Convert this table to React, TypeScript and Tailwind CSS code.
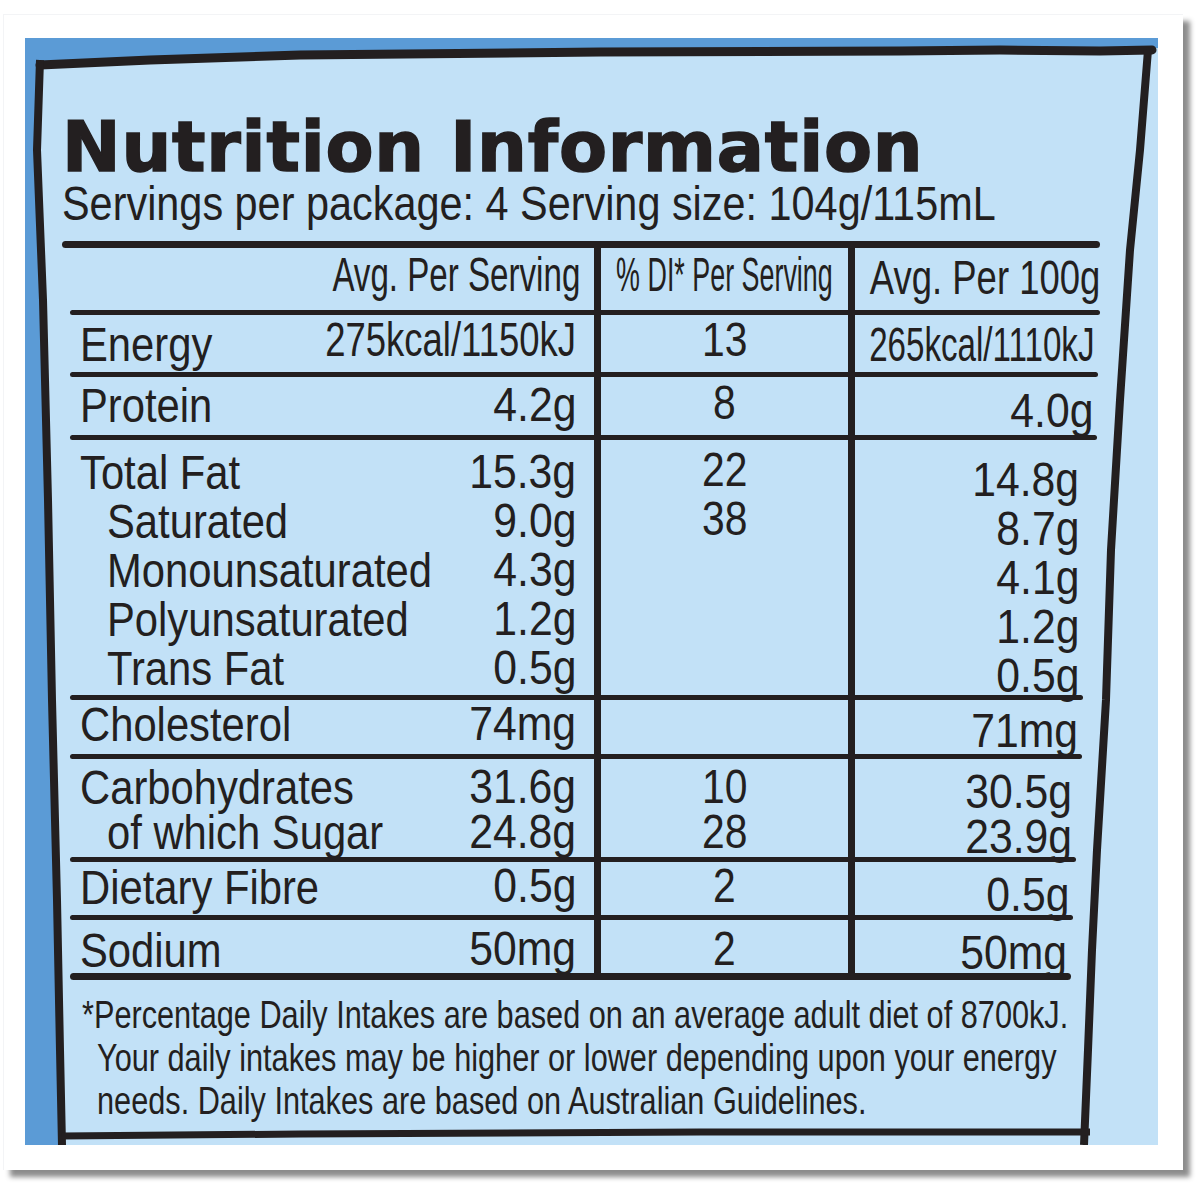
import React from "react";

const SANS = "[font-family:'Liberation_Sans',Arial,sans-serif]";

// condensed look: Liberation Sans squeezed horizontally
const LBL = "inline-block whitespace-nowrap origin-left scale-x-[0.87]";
const NUM = "inline-block whitespace-nowrap origin-right scale-x-[0.89]";
const MID = "inline-block whitespace-nowrap origin-center scale-x-[0.85]";

type Cell = { lines: string[]; pt: string; cls?: string };

interface Row {
  labels: { text: string; sub?: boolean }[];
  labelPt: string;
  lead: string;
  values: Cell;
  di: Cell;
  per100: Cell;
  h: string;
  w: string;
}

const ROWS: Row[] = [
  {
    labels: [{ text: "Energy" }],
    labelPt: "pt-[6px]",
    lead: "leading-[48px]",
    values: { lines: ["275kcal/1150kJ"], pt: "pt-[1px]", cls: "inline-block whitespace-nowrap origin-right scale-x-[0.76]" },
    di: { lines: ["13"], pt: "pt-[1px]" },
    per100: { lines: ["265kcal/1110kJ"], pt: "pt-[6px]", cls: "inline-block whitespace-nowrap origin-right scale-x-[0.69]" },
    h: "h-[57px]",
    w: "w-[1028px]",
  },
  {
    labels: [{ text: "Protein" }],
    labelPt: "pt-[5px]",
    lead: "leading-[48px]",
    values: { lines: ["4.2g"], pt: "pt-[4px]" },
    di: { lines: ["8"], pt: "pt-[2px]" },
    per100: { lines: ["4.0g"], pt: "pt-[10px]" },
    h: "h-[58px]",
    w: "w-[1027px]",
  },
  {
    labels: [
      { text: "Total Fat" },
      { text: "Saturated", sub: true },
      { text: "Monounsaturated", sub: true },
      { text: "Polyunsaturated", sub: true },
      { text: "Trans Fat", sub: true },
    ],
    labelPt: "pt-[8px]",
    lead: "leading-[49px]",
    values: { lines: ["15.3g", "9.0g", "4.3g", "1.2g", "0.5g"], pt: "pt-[7px]" },
    di: { lines: ["22", "38"], pt: "pt-[5px]" },
    per100: { lines: ["14.8g", "8.7g", "4.1g", "1.2g", "0.5g"], pt: "pt-[15px]" },
    h: "h-[255px]",
    w: "w-[1013px]",
  },
  {
    labels: [{ text: "Cholesterol" }],
    labelPt: "pt-[1px]",
    lead: "leading-[48px]",
    values: { lines: ["74mg"], pt: "pt-[0px]" },
    di: { lines: [""], pt: "pt-[0px]" },
    per100: { lines: ["71mg"], pt: "pt-[7px]" },
    h: "h-[54px]",
    w: "w-[1012px]",
  },
  {
    labels: [{ text: "Carbohydrates" }, { text: "of which Sugar", sub: true }],
    labelPt: "pt-[6px]",
    lead: "leading-[45px]",
    values: { lines: ["31.6g", "24.8g"], pt: "pt-[5px]" },
    di: { lines: ["10", "28"], pt: "pt-[5px]" },
    per100: { lines: ["30.5g", "23.9g"], pt: "pt-[10px]" },
    h: "h-[98px]",
    w: "w-[1006px]",
  },
  {
    labels: [{ text: "Dietary Fibre" }],
    labelPt: "pt-[2px]",
    lead: "leading-[48px]",
    values: { lines: ["0.5g"], pt: "pt-[0px]" },
    di: { lines: ["2"], pt: "pt-[0px]" },
    per100: { lines: ["0.5g"], pt: "pt-[9px]" },
    h: "h-[53px]",
    w: "w-[1003px]",
  },
  {
    labels: [{ text: "Sodium" }],
    labelPt: "pt-[7px]",
    lead: "leading-[48px]",
    values: { lines: ["50mg"], pt: "pt-[5px]" },
    di: { lines: ["2"], pt: "pt-[5px]" },
    per100: { lines: ["50mg"], pt: "pt-[9px]" },
    h: "h-[53px]",
    w: "w-[1001px]",
  },
];

const SEP_WIDTHS = ["w-[1028px]", "w-[1027px]", "w-[1013px]", "w-[1012px]", "w-[1006px]", "w-[1003px]"];

function Lines({ cell, lead, align, cls }: { cell: Cell; lead: string; align: string; cls: string }) {
  return (
    <div className={`${cell.pt} ${lead}`}>
      {cell.lines.map((l, i) => (
        <div key={i} className={`flex ${align}`}>
          <span className={cell.cls ?? cls}>{l || "\u00a0"}</span>
        </div>
      ))}
    </div>
  );
}

function LabelBorder() {
  // hand-drawn outline of the label, plus the darker lid colour peeking out top/left
  return (
    <svg className="pointer-events-none absolute inset-0" width="1133" height="1107" viewBox="25 38 1133 1107">
      <path
        d="M25 38 L1158 38 L1158 48 L1100 49 L900 49 L600 50 L300 53 L150 58 L40 62 L38 150 L43 300 L48 500 L52 700 L57 900 L60 1050 L61 1145 L25 1145 Z"
        fill="#5b9bd6"
      />
      <path
        d="M1152 50 L1100 51 L1000 50 L900 51 L600 52 L300 55 L150 60 L40 65"
        fill="none"
        stroke="#231f20"
        strokeWidth="9"
        strokeLinecap="round"
      />
      <path
        d="M40 60 L37 150 L43 300 L48 500 L52 700 L57 900 L60 1050 L62 1145"
        fill="none"
        stroke="#231f20"
        strokeWidth="8"
      />
      <path
        d="M1148 50 L1140 150 L1130 250 L1120 400 L1111 550 L1106 700 L1097 850 L1092 950 L1088 1050 L1084 1145"
        fill="none"
        stroke="#231f20"
        strokeWidth="8"
      />
      <path d="M62 1136 L300 1134 L700 1132 L1090 1132" fill="none" stroke="#231f20" strokeWidth="7" />
    </svg>
  );
}

export default function App() {
  return (
    <div className="h-[1200px] w-[1200px] overflow-hidden bg-white">
      <div className="ml-[3px] mt-[14px] h-[1156px] w-[1180px] border-l border-t border-gray-100 bg-white pl-[21px] pt-[23px] shadow-[7px_7px_5px_rgba(0,0,0,0.45)]">
        <div className={`relative h-[1107px] w-[1133px] overflow-hidden bg-[#c2e1f7] text-[#231f20] ${SANS}`}>
          <LabelBorder />
          <div className="relative pl-[37px] pt-[77px]">
            <h1 className="h-[65px] text-[70px] font-bold leading-[65px] tracking-[0.8px] [-webkit-text-stroke:1.5px_#231f20] [font-family:'DejaVu_Sans',sans-serif]">
              Nutrition Information
            </h1>
            <p className="h-[46px] text-[49px] leading-[46px]">
              <span className="inline-block whitespace-nowrap origin-left scale-x-[0.845]">
                Servings per package: 4 Serving size: 104g/115mL
              </span>
            </p>

            <div className="mt-[15px] h-[7px] w-[1038px] rounded-full bg-[#231f20]" />

            <div className="ml-[8px] text-[48px]">
              {/* column headings */}
              <div className="flex h-[62px] w-[1030px]">
                <div className="flex w-[524px] shrink-0 justify-end pr-[14px] pt-[3px] leading-[48px]">
                  <span className="inline-block whitespace-nowrap origin-right scale-x-[0.69]">Avg. Per Serving</span>
                </div>
                <div className="flex w-[254px] shrink-0 justify-center border-l-[7px] border-[#231f20] pt-[3px] leading-[48px]">
                  <span className="inline-block whitespace-nowrap origin-center scale-x-[0.56]">% DI* Per Serving</span>
                </div>
                <div className="flex min-w-0 flex-1 justify-end border-l-[7px] border-[#231f20] pt-[6px] leading-[48px]">
                  <span className="inline-block shrink-0 whitespace-nowrap origin-right scale-x-[0.76]">Avg. Per 100g</span>
                </div>
              </div>
              <div className="h-[5px] w-[1030px] rounded-full bg-[#231f20]" />

              {ROWS.map((row, i) => (
                <React.Fragment key={i}>
                  <div className={`flex ${row.h} ${row.w}`}>
                    <div className="flex w-[524px] shrink-0 pl-[10px] pr-[18px]">
                      <div className={`w-[330px] shrink-0 ${row.labelPt} ${row.lead}`}>
                        {row.labels.map((l) => (
                          <div key={l.text} className={l.sub ? "pl-[27px]" : ""}>
                            <span className={LBL}>{l.text}</span>
                          </div>
                        ))}
                      </div>
                      <div className="min-w-0 flex-1">
                        <Lines cell={row.values} lead={row.lead} align="justify-end" cls={NUM} />
                      </div>
                    </div>
                    <div className="w-[254px] shrink-0 border-l-[7px] border-[#231f20]">
                      <Lines cell={row.di} lead={row.lead} align="justify-center" cls={MID} />
                    </div>
                    <div className="min-w-0 flex-1 border-l-[7px] border-[#231f20] pr-[4px]">
                      <Lines cell={row.per100} lead={row.lead} align="justify-end" cls={NUM} />
                    </div>
                  </div>
                  {i < SEP_WIDTHS.length ? (
                    <div className={`h-[5px] rounded-full bg-[#231f20] ${SEP_WIDTHS[i]}`} />
                  ) : (
                    <div className="h-[7px] w-[1001px] rounded-full bg-[#231f20]" />
                  )}
                </React.Fragment>
              ))}
            </div>

            <div className="ml-[20px] mt-[13px] text-[39px] leading-[43px]">
              <p>
                <span className="inline-block whitespace-nowrap origin-left scale-x-[0.787]">
                  *Percentage Daily Intakes are based on an average adult diet of 8700kJ.
                </span>
              </p>
              <p className="pl-[15px]">
                <span className="inline-block whitespace-nowrap origin-left scale-x-[0.787]">
                  Your daily intakes may be higher or lower depending upon your energy
                </span>
              </p>
              <p className="pl-[15px]">
                <span className="inline-block whitespace-nowrap origin-left scale-x-[0.787]">
                  needs. Daily Intakes are based on Australian Guidelines.
                </span>
              </p>
            </div>
          </div>
        </div>
      </div>
    </div>
  );
}
